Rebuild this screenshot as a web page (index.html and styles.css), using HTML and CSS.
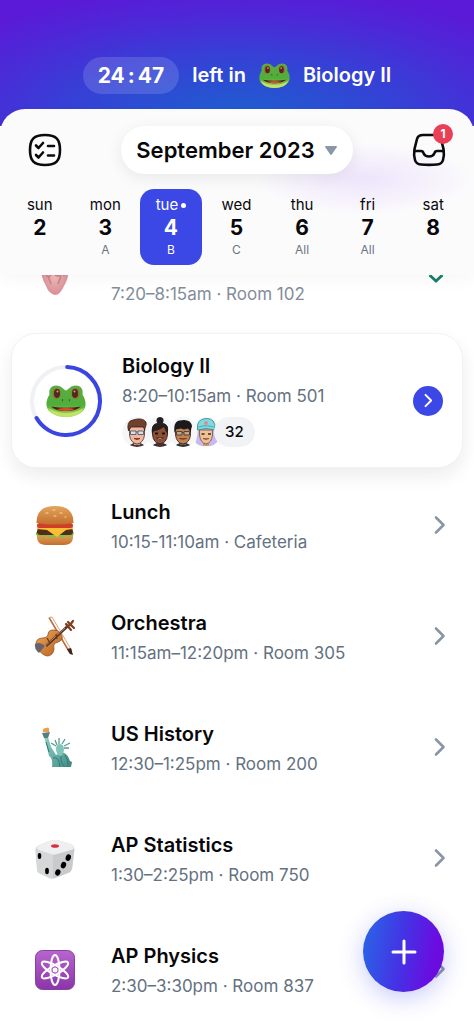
FILE: index.html
```html
<!DOCTYPE html>
<html lang="en">
<head>
<meta charset="utf-8">
<meta name="viewport" content="width=device-width, initial-scale=1">
<title>Class schedule</title>
<link rel="stylesheet" href="styles.css">
</head>
<body>
<svg class="defs" aria-hidden="true">
  <defs>
    <linearGradient id="frogSkin" x1="0" y1="0" x2="0" y2="1"><stop offset="0" stop-color="#5faa42"/><stop offset=".6" stop-color="#4fae3a"/><stop offset="1" stop-color="#9bd44f"/></linearGradient>
    <linearGradient id="bun" x1="0" y1="0" x2="0" y2="1"><stop offset="0" stop-color="#e5a45c"/><stop offset="1" stop-color="#c26f2c"/></linearGradient>
    <linearGradient id="copper" x1="0" y1="0" x2="1" y2="1"><stop offset="0" stop-color="#8fd0c4"/><stop offset="1" stop-color="#3f8d86"/></linearGradient>
    <linearGradient id="wood" x1="0" y1="0" x2="1" y2="1"><stop offset="0" stop-color="#f0a556"/><stop offset="1" stop-color="#b4601f"/></linearGradient>
    <linearGradient id="violet" x1="0" y1="0" x2="0" y2="1"><stop offset="0" stop-color="#b765cf"/><stop offset="1" stop-color="#8a35a8"/></linearGradient>
    <radialGradient id="heart"><stop offset="0" stop-color="#edb0a8"/><stop offset="1" stop-color="#d0707c"/></radialGradient>
    <symbol id="frog" viewBox="0 0 40 32">
      <path d="M20 5.500C23 4.500 24 .5 30 .5c5 0 7.500 4 6.500 9 2 3 3.500 7 3 11C38.500 28 29 32 20 32S1.500 28 .5 20.500C0 16.500 1.500 12.500 3.500 9.500 2.500 4.500 5 .5 10 .5 16 .5 17 4.500 20 5.500z" fill="url(#frogSkin)"/>
      <path d="M2 23q18 10 36 0-4 9-18 9T2 23z" fill="#bfe267"/>
      <ellipse cx="10.500" cy="8.500" rx="4.200" ry="5.600" fill="#8d7a3a"/><ellipse cx="29.500" cy="8.500" rx="4.200" ry="5.600" fill="#8d7a3a"/>
      <ellipse cx="11" cy="8.500" rx="3" ry="4.400" fill="#54261d"/><ellipse cx="29" cy="8.500" rx="3" ry="4.400" fill="#54261d"/>
      <circle cx="11.500" cy="6.500" r="1" fill="#c7a78e"/><circle cx="28.500" cy="6.500" r="1" fill="#c7a78e"/>
      <path d="M16.500 14.500v1.200M23.500 14.500v1.200" stroke="#2c6b24" stroke-width="1.200" stroke-linecap="round"/>
      <path d="M5 21.500Q20 24 35 21.500 30 26 20 26T5 21.500z" fill="#541b17"/>
      <path d="M11 24q9-2 18 0-4 2-9 2t-9-2z" fill="#dd4a35"/>
    </symbol>
    <symbol id="chevron" viewBox="0 0 12 20"><path d="M2 2.500 9.500 10 2 17.500" fill="none" stroke="currentColor" stroke-width="2.600" stroke-linecap="round" stroke-linejoin="round"/></symbol>
  </defs>
</svg>

<header class="banner">
  <span class="timer">24<span class="colon">:</span>47</span>
  <span>left in</span>
  <svg class="banner-frog" aria-hidden="true"><use href="#frog"/></svg>
  <span>Biology II</span>
</header>

<section class="panel">
  <div class="toolbar">
    <button class="icon-button" aria-label="Tasks">
      <svg width="34" height="34" viewBox="0 0 34 34" fill="none" stroke="#0b0b0d" stroke-width="2.600" stroke-linecap="round" stroke-linejoin="round">
        <path d="M17 2C28 2 32 6 32 17s-4 15-15 15S2 28 2 17 6 2 17 2z"/>
        <path d="m8 12.500 2.500 2.500 4.500-5M8 22l2.500 2.500 4.500-5M20 13h6M20 22.500h6"/>
      </svg>
    </button>
    <button class="month">September 2023
      <svg width="14" height="11" viewBox="0 0 14 11" aria-hidden="true"><path d="M2 1h10q1.500 0 .7 1.300L8 9.300q-1 1.300-2 0L1.300 2.300Q.5 1 2 1z" fill="#8a97a8"/></svg>
    </button>
    <button class="icon-button" aria-label="Inbox">
      <svg width="34" height="34" viewBox="0 0 34 34" fill="none" stroke="#0b0b0d" stroke-width="2.600" stroke-linecap="round" stroke-linejoin="round">
        <path d="M11 2h12q5 0 6 4l2.500 10q1 6-.5 11-1 4-6 4.500-8 .7-16 0Q4 31 3 27 1.500 22 2.500 16L5 6q1-4 6-4z"/>
        <path d="M2.500 18H9q2 0 2.700 2.500Q13 23.500 17 23.500t5.300-3Q23 18 25 18h6.500"/>
      </svg>
      <span class="badge">1</span>
    </button>
  </div>
  <nav class="week" aria-label="Week">
    <button class="day"><span class="name">sun</span><b>2</b><small></small></button>
    <button class="day"><span class="name">mon</span><b>3</b><small>A</small></button>
    <button class="day selected" aria-current="date"><span class="name">tue<i class="dot"></i></span><b>4</b><small>B</small></button>
    <button class="day"><span class="name">wed</span><b>5</b><small>C</small></button>
    <button class="day"><span class="name">thu</span><b>6</b><small>All</small></button>
    <button class="day"><span class="name">fri</span><b>7</b><small>All</small></button>
    <button class="day"><span class="name">sat</span><b>8</b><small></small></button>
  </nav>
</section>

<main class="list">
  <a class="row past" href="#period-1">
    <svg class="emoji" viewBox="0 0 42 42" aria-hidden="true">
      <path d="M7 4Q20-4 35 6q1 14-5 24-4 9-9 9-6-1-9-9Q5 18 7 4z" fill="url(#heart)"/>
      <path d="M11 16q2 7 5 4 1-4 4-2 4 4 7 0t3 2M14 20l3 8M27 20l-3 8" fill="none" stroke="#bd606d" stroke-width="1.500"/>
    </svg>
    <div class="info"><p>7:20–8:15am · Room 102</p></div>
    <svg class="done" width="16" height="10" viewBox="0 0 16 10" aria-hidden="true"><path d="m1.500 2 6.500 6L14.500 2" fill="none" stroke="#178069" stroke-width="2.800"/></svg>
  </a>

  <a class="row card" href="#biology">
    <div class="ring">
      <svg viewBox="0 0 72 72" aria-hidden="true">
        <circle cx="36" cy="36" r="34" fill="none" stroke="#f0f1f4" stroke-width="4"/>
        <circle cx="36" cy="36" r="34" fill="none" stroke="#3a45e3" stroke-width="4" stroke-linecap="round" pathLength="360" stroke-dasharray="238 360" transform="rotate(-88 36 36)"/>
        <use href="#frog" x="16" y="20" width="40" height="32"/>
      </svg>
    </div>
    <div class="info">
      <h2>Biology II</h2>
      <p>8:20–10:15am · Room 501</p>
      <div class="people">
        <svg class="face" viewBox="0 0 30 30" aria-hidden="true">
          <path d="M7 30q1-3 5-4h6q4 1 5 4z" fill="#493638"/><rect x="12" y="22" width="6" height="6" fill="#d69b80"/>
          <path d="M7.500 12q0-6 7.500-6t7.500 6v6q-1 8-7.500 9-6.500-1-7.500-9z" fill="#f0b99d" stroke="#543028" stroke-width=".8"/>
          <path d="M6.500 14Q4 4 11 3q9-3 13 2 1 4-1 9l-1.500-4H9z" fill="#70402c" stroke="#352019" stroke-width=".8"/>
          <path d="M8.500 14h5.500v3.500H8.500zM16 14h5.500v3.500H16zM14 15h2" fill="#dce0e5" stroke="#596779" stroke-width="1"/>
          <path d="M12 21.500q3 2.500 6 0z" fill="#fff" stroke="#6d3029" stroke-width=".9"/>
        </svg>
        <svg class="face" viewBox="0 0 30 30" aria-hidden="true">
          <path d="M7 30q1-3 5-4h6q4 1 5 4z" fill="#3a3134"/><circle cx="15" cy="3.500" r="3.500" fill="#241f21"/><rect x="12" y="22" width="6" height="6" fill="#60331f"/>
          <path d="M7.500 12q0-6 7.500-6t7.500 6v6q-1 8-7.500 9-6.500-1-7.500-9z" fill="#8c5134" stroke="#2b1a17" stroke-width=".8"/>
          <path d="M7 17Q5 6 15 6t8 11q-3-3-4-7-6 4-10 4z" fill="#241f21"/>
          <path d="M10 16.500h3M17 16.500h3" stroke="#1e1312" stroke-width="1.800"/><path d="M11.500 21q3.500 3 7 0z" fill="#fff" stroke="#401b17" stroke-width=".8"/>
        </svg>
        <svg class="face" viewBox="0 0 30 30" aria-hidden="true">
          <path d="M7 30q1-3 5-4h6q4 1 5 4z" fill="#29353d"/><rect x="12" y="22" width="6" height="6" fill="#8d542e"/>
          <path d="M7.500 12q0-6 7.500-6t7.500 6v6q-1 8-7.500 9-6.500-1-7.500-9z" fill="#c5824e" stroke="#2d1c17" stroke-width=".8"/>
          <path d="M6.500 16Q5 4 12 3.500q11-2 12 6l-1 6-3-4-4 1-3-1-5 1z" fill="#1c191c"/>
          <path d="M8.500 14.500h5.500V18H8.500zM16 14.500h5.500V18H16zM14 15.500h2" fill="#c6a486" stroke="#4b4744" stroke-width="1"/>
          <path d="M11.500 21.500q3.500 2.500 7 0z" fill="#fff" stroke="#5c2b1d" stroke-width=".8"/>
        </svg>
        <svg class="face" viewBox="0 0 30 30" aria-hidden="true">
          <path d="M7 11Q6 24 3.500 28l9 1h9l6-3q-4-5-4-15z" fill="#c7b8f2"/><rect x="12" y="22" width="6" height="7" fill="#cf9970"/>
          <path d="M8.500 13h13v5q-1 8-6.500 9-5.500-1-6.500-9z" fill="#f0c193" stroke="#72513f" stroke-width=".8"/>
          <path d="M6.500 13Q5 2 15 1.500T24 13q-9-3-17.500 0z" fill="#80dcdc" stroke="#438b98" stroke-width=".9"/>
          <path d="M6.500 10.500Q15 7 24 10.500" fill="none" stroke="#52a7b0"/><circle cx="15" cy="6" r="2" fill="#db8c9b"/>
          <path d="M10.500 17h3M17 17h3" stroke="#3b2a28" stroke-width="1.600"/><path d="M12 21.500q3 2.500 6 0z" fill="#fff" stroke="#874238" stroke-width=".8"/>
        </svg>
        <span class="count">32</span>
      </div>
    </div>
    <span class="go"><svg viewBox="0 0 12 20" aria-hidden="true"><use href="#chevron"/></svg></span>
  </a>

  <a class="row" href="#lunch">
    <svg class="emoji" viewBox="0 0 42 42" aria-hidden="true">
      <path d="M3 29h36q1 11-9 11H12Q2 40 3 29z" fill="url(#bun)"/>
      <path d="M2 27h38l-1 4-4 1-3-1-4 2-5-2-5 2-5-2-4 1-4-1-3-1z" fill="#7fc247"/>
      <rect x="3" y="23" width="36" height="7" rx="3.500" fill="#552b1c"/>
      <path d="M3 22h36v2l-7 1-9 7-10-7-10-1z" fill="#fbbf35"/><rect x="3" y="18" width="36" height="5" rx="2.500" fill="#cf3f27"/>
      <path d="M2.500 18Q2 1 21 1t18.500 17q-18 3-37 0z" fill="url(#bun)"/>
      <path d="M12 8h2M19 5h2M26 8h2M20 11h2M31 12h1" stroke="#f8d79d" stroke-width="1.200" stroke-linecap="round"/>
    </svg>
    <div class="info"><h2>Lunch</h2><p>10:15-11:10am · Cafeteria</p></div>
    <svg class="chevron" aria-hidden="true"><use href="#chevron"/></svg>
  </a>

  <a class="row" href="#orchestra">
    <svg class="emoji" viewBox="0 0 42 42" aria-hidden="true">
      <path d="M15 1.500 36 37" stroke="#b96b38" stroke-width="1.500"/><path d="m15 1.500 3-.5L38 35" fill="none" stroke="#d9a57a" stroke-width="1"/>
      <path d="m33 33 4-1 2 7-3-1z" fill="#40241e"/>
      <path d="M2 28q0-6 7-6 4 0 5-3 0-5 5-5 5-1 8 4 3 5-1 7-3 2-5 2-2 2-1 6-1 7-7 7-8-2-11-12z" fill="url(#wood)" stroke="#93501e" stroke-width=".8"/>
      <path d="m12 30 23-21" stroke="#563126" stroke-width="2.500"/><path d="m9 32 22-20" stroke="#bfa184" stroke-width=".8"/>
      <path d="M1 28q5-3 10 2l-6 7q-5-4-4-9z" fill="#66636b"/><path d="m34 6 6 6M32 8l5 6M36 9l3-4" stroke="#7d3f1e" stroke-width="2.200" stroke-linecap="round"/>
      <path d="m13 22 3 5M22 18l1 5" stroke="#70371c" stroke-width="1.300"/>
    </svg>
    <div class="info"><h2>Orchestra</h2><p>11:15am–12:20pm · Room 305</p></div>
    <svg class="chevron" aria-hidden="true"><use href="#chevron"/></svg>
  </a>

  <a class="row" href="#history">
    <svg class="emoji" viewBox="0 0 42 42" aria-hidden="true">
      <path d="M10 10h4l3 10 5 8 6-3q8 2 9 15H18q1-9-3-11-2-10-5-19z" fill="url(#copper)"/>
      <path d="m8 6 8-1-2 6h-4z" fill="#58807a"/><path d="M9 5q-1-4 3-4 4-2 3 4z" fill="#e9a04c"/>
      <path d="M22 22q0-5 4-5t4 6q-1 6-4 6-4-2-4-7z" fill="#80c5b9"/>
      <path d="m22 19-5-3m6 2-2-5m4 4v-6m3 6 3-5m-1 7 6-3m-6 5 5 0" stroke="#5c9a91" stroke-width="1.300"/>
      <path d="M19 31q6-2 7 9M27 29q-1 7 4 11M31 28q4 5 3 12M12 15l3 10" fill="none" stroke="#31776f" stroke-width="1"/>
      <path d="m34 33 4 2-1 5h-3z" fill="#47887f"/>
    </svg>
    <div class="info"><h2>US History</h2><p>12:30–1:25pm · Room 200</p></div>
    <svg class="chevron" aria-hidden="true"><use href="#chevron"/></svg>
  </a>

  <a class="row" href="#statistics">
    <svg class="emoji" viewBox="0 0 42 42" aria-hidden="true">
      <path d="M21 2q3 0 6 1l10 3q4 2 3.500 6L38 31q-1 3-4 4l-13 5q-3 1-6 0L5 35q-2-1-2-4L1.500 12q0-4 4-5L15 3q3-1 6-1z" fill="#d9dadb"/>
      <path d="M1.500 12q0-1 1-1.500L17 15q2 1 2 3v22q-2 1-4 0L5 35q-2-1-2-4z" fill="#d6d7d8"/>
      <path d="M40 11q.5 1 0 3l-2 17q-1 3-4 4l-13 5q-1 .5-2 0V18q0-2 3-3z" fill="#c9cacc"/>
      <path d="M3 9q1-1.500 3-2l9-4q6-2 12 0l10 3q2 1 3 4-1 1.500-3 2l-14 4q-3 1-6 0L5 12q-2-1-2-3z" fill="#efefef"/>
      <ellipse cx="21" cy="8" rx="4" ry="1.800" fill="#d82e42"/>
      <ellipse cx="5.500" cy="18" rx="1.800" ry="3"/><ellipse cx="13" cy="33" rx="1.900" ry="3.200"/>
      <ellipse cx="34.500" cy="19.500" rx="2.600" ry="3.300" transform="rotate(20 34 19)"/><ellipse cx="29.500" cy="27" rx="2.600" ry="3.300" transform="rotate(20 29 27)"/><ellipse cx="24" cy="34.500" rx="2.600" ry="3.200" transform="rotate(20 24 34)"/>
    </svg>
    <div class="info"><h2>AP Statistics</h2><p>1:30–2:25pm · Room 750</p></div>
    <svg class="chevron" aria-hidden="true"><use href="#chevron"/></svg>
  </a>

  <a class="row" href="#physics">
    <svg class="emoji" viewBox="0 0 42 42" aria-hidden="true">
      <rect x="1.500" y="1.500" width="39" height="39" rx="7" fill="url(#violet)" stroke="#87419d" stroke-width="1"/>
      <g fill="none" stroke="#fff" stroke-width="2"><ellipse cx="21" cy="21" rx="4.500" ry="15"/><ellipse cx="21" cy="21" rx="4.500" ry="15" transform="rotate(60 21 21)"/><ellipse cx="21" cy="21" rx="4.500" ry="15" transform="rotate(-60 21 21)"/></g>
      <circle cx="21" cy="21" r="2.500" fill="#fff"/>
    </svg>
    <div class="info"><h2>AP Physics</h2><p>2:30–3:30pm · Room 837</p></div>
    <svg class="chevron" aria-hidden="true"><use href="#chevron"/></svg>
  </a>
</main>

<button class="add" aria-label="Add class">
  <svg width="26" height="26" viewBox="0 0 26 26" aria-hidden="true"><path d="M13 2v22M2 13h22" stroke="#fff" stroke-width="3" stroke-linecap="round"/></svg>
</button>
</body>
</html>
```
FILE: styles.css
```css
* { box-sizing: border-box; }

body {
  margin: 0;
  height: 100vh;
  overflow: hidden;
  background: #fff;
  color: #08080a;
  font-family: Inter, "Liberation Sans", sans-serif;
}

button {
  border: 0;
  padding: 0;
  background: none;
  color: inherit;
  font-family: inherit;
  cursor: pointer;
}

a { color: inherit; text-decoration: none; }
svg { display: block; flex: none; }
.defs { position: absolute; width: 0; height: 0; }

.banner {
  display: flex;
  justify-content: center;
  align-items: center;
  gap: 13px;
  padding: 57px 0 32px;
  background: radial-gradient(ellipse 75% 105% at 50% 95%, #1c60cf 0%, #373fd6 50%, #4a2bd7 75%, #5a1ad7 100%);
  color: #fff;
  font-size: 20px;
  font-weight: 600;
  line-height: 37px;
}

.timer {
  padding: 0 15px;
  border-radius: 19px;
  background: rgba(255, 255, 255, .14);
  font-size: 21px;
  font-weight: 700;
}

.colon { padding: 0 3px; }

.banner-frog { width: 31px; height: 25px; }

.panel {
  position: relative;
  z-index: 1;
  margin-top: -17px;
  padding: 17px 0 10px;
  border-radius: 25px 25px 0 0;
  background:
    radial-gradient(ellipse 110px 36px at 77% 42%, rgba(235, 222, 252, .8), rgba(235, 222, 252, 0)),
    #fbfbfc;
  box-shadow: 0 6px 16px rgba(20, 20, 40, .03);
}

.toolbar {
  display: flex;
  justify-content: space-between;
  align-items: center;
  padding: 0 28px;
}

.icon-button { position: relative; }

.month {
  display: flex;
  align-items: center;
  gap: 9px;
  height: 48px;
  padding: 0 15px;
  border-radius: 24px;
  background: #fff;
  box-shadow: 0 4px 16px rgba(20, 20, 40, .08);
  font-size: 22px;
  font-weight: 600;
}

.badge {
  position: absolute;
  top: -9px;
  right: -7px;
  width: 20px;
  border-radius: 50%;
  background: #e94057;
  color: #fff;
  font-size: 12px;
  font-weight: 700;
  line-height: 20px;
}

.week {
  display: grid;
  grid-template-columns: repeat(7, 1fr);
  padding: 0 8px 0 7px;
  margin-top: 15px;
}

.day {
  display: flex;
  flex-direction: column;
  align-items: center;
  height: 76px;
  margin: 0 2px;
  padding-top: 5px;
  border-radius: 14px;
}

.day .name { font-size: 15px; line-height: 21px; }
.day b { font-size: 21px; font-weight: 700; line-height: 26px; }
.day small { height: 18px; color: #69747f; font-size: 12px; line-height: 18px; }

.selected { background: #3b48e6; color: #fff; }
.day.selected small { color: #fff; }

.dot {
  display: inline-block;
  width: 5px;
  height: 5px;
  margin-left: 3px;
  border-radius: 50%;
  background: #fff;
  vertical-align: middle;
}

.list { margin-top: -53px; }

.row {
  display: flex;
  align-items: center;
  height: 111px;
  padding: 0 28px 0 34px;
}

.emoji { width: 42px; height: 42px; margin: 0 35px 2px 0; }
.info { flex: 1; white-space: nowrap; }

h2 { margin: 0; font-size: 20px; font-weight: 600; line-height: 30px; }
p { margin: 0; color: #647180; font-size: 17px; line-height: 30px; }

.chevron { width: 12px; height: 20px; margin-bottom: 3px; color: #8996a5; }
.past .emoji, .past p { opacity: .8; }
.past .info { padding-top: 32px; }
.done { margin-right: 2px; }

.card {
  height: 135px;
  margin: 0 11px 3px;
  padding: 0 19px 0 18px;
  border: 1px solid #f2f2f4;
  border-radius: 25px;
  background: #fff;
  box-shadow: 0 8px 18px rgba(20, 20, 30, .08);
}

.card .info { padding-bottom: 4px; }
.ring { width: 72px; margin-right: 20px; }

.people { display: flex; margin-top: 6px; }

.face {
  width: 30px;
  height: 30px;
  margin-right: -7px;
  border-radius: 50%;
  background: #f5f6f8;
}

.count {
  padding: 0 11px;
  border-radius: 15px;
  background: #f1f3f5;
  font-size: 15px;
  font-weight: 500;
  line-height: 30px;
}

.go {
  display: grid;
  place-items: center;
  width: 30px;
  height: 30px;
  border-radius: 50%;
  background: #3b48e6;
  color: #fff;
}

.go svg { width: 9px; height: 15px; }

.add {
  position: fixed;
  z-index: 2;
  right: 30px;
  bottom: 34px;
  display: grid;
  place-items: center;
  width: 81px;
  height: 81px;
  border-radius: 50%;
  background: linear-gradient(100deg, #2a63e6 5%, #4630e4 50%, #6c0be0 85%);
  box-shadow: 0 6px 24px rgba(70, 80, 235, .3);
}
```
